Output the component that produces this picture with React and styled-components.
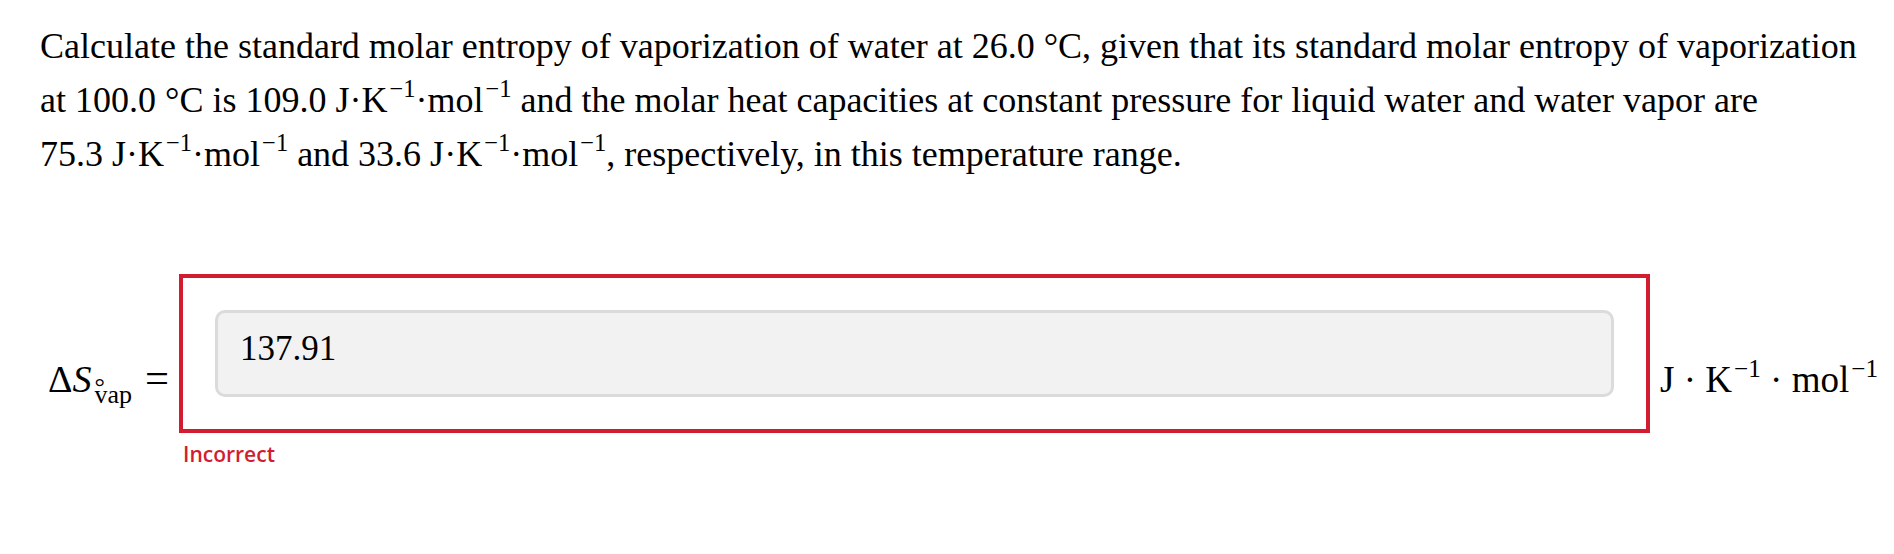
import React from "react";
import styled, { createGlobalStyle } from "styled-components";

const GlobalStyle = createGlobalStyle`
  html, body {
    margin: 0;
    padding: 0;
    background: #fff;
  }
  body {
    font-family: "Liberation Serif", "Times New Roman", serif;
    color: #000;
  }
`;

const RED = "#d21d30";

function Unit({ spaced }) {
  const dot = spaced ? " · " : "·";
  return (
    <>
      J{dot}K<Sup>−1</Sup>{dot}mol<Sup>−1</Sup>
    </>
  );
}

export default function App() {
  return (
    <Page>
      <GlobalStyle />
      <Question>
        Calculate the standard molar entropy of vaporization of water at 26.0 °C, given that its standard molar entropy of vaporization
        <br />
        at 100.0 °C is 109.0 <Unit /> and the molar heat capacities at constant pressure for liquid water and water vapor are
        <br />
        75.3 <Unit /> and 33.6 <Unit />, respectively, in this temperature range.
      </Question>
      <AnswerRow>
        <Label>
          Δ<Italic>S</Italic>
          <Script>
            <Deg>°</Deg>
            <Sub>vap</Sub>
          </Script>
          <Equals>=</Equals>
        </Label>
        <AnswerColumn>
          <AnswerBox>
            <Field defaultValue="137.91" readOnly />
          </AnswerBox>
          <Feedback>Incorrect</Feedback>
        </AnswerColumn>
        <Units>
          <Unit spaced />
        </Units>
      </AnswerRow>
    </Page>
  );
}

const Page = styled.div`
  width: 1894px;
  min-height: 554px;
  box-sizing: border-box;
  padding: 19px 16px 0 40px;
`;

const Question = styled.p`
  margin: 0;
  font-size: 36px;
  line-height: 54px;
  white-space: nowrap;
`;

const Sup = styled.sup`
  font-size: 0.68em;
  line-height: 0;
  margin-left: 2px;
  vertical-align: 0.6em;
`;

const AnswerRow = styled.div`
  display: flex;
  align-items: flex-start;
  gap: 10px;
  margin-top: 93px;
  margin-left: 8px;
`;

const Label = styled.div`
  margin-top: 84px;
  font-size: 38px;
  line-height: 42px;
  white-space: nowrap;
`;

const Italic = styled.span`
  font-style: italic;
`;

const Script = styled.span`
  position: relative;
  display: inline-block;
  margin-left: 3px;
  font-size: 26px;
  line-height: 1;
  vertical-align: -11px;
`;

const Deg = styled.span`
  position: absolute;
  left: 0;
  bottom: 8px;
`;

const Sub = styled.span`
  display: block;
`;

const Equals = styled.span`
  display: inline-block;
  margin-left: 13px;
  font-size: 1.12em;
  line-height: 0;
`;

const AnswerColumn = styled.div`
  flex: 1;
  display: flex;
  flex-direction: column;
`;

const AnswerBox = styled.div`
  border: 4px solid ${RED};
  padding: 32px;
`;

const Field = styled.input`
  display: block;
  width: 100%;
  height: 87px;
  box-sizing: border-box;
  border: 3px solid #dbdbdb;
  border-radius: 10px;
  background: #f2f2f2;
  padding: 0 0 10px 22px;
  font-family: "Liberation Serif", "Times New Roman", serif;
  font-size: 35px;
  color: #000;
  outline: none;
`;

const Feedback = styled.div`
  margin: 7px 0 0 4px;
  font-family: "Open Sans", sans-serif;
  font-weight: 600;
  font-size: 21px;
  color: ${RED};
`;

const Units = styled.div`
  margin-top: 85px;
  font-size: 37px;
  line-height: 42px;
  white-space: nowrap;
`;
